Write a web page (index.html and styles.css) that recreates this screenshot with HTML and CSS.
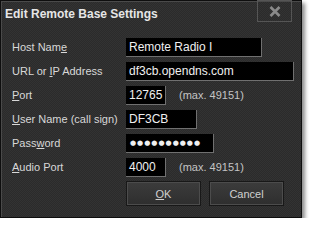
FILE: index.html
```html
<!DOCTYPE html>
<html lang="en">
<head>
    <meta charset="UTF-8">
    <title>Edit Remote Base Settings</title>
    <link rel="stylesheet" href="styles.css">
</head>
<body>
    <div class="dialog">
        <div class="titlebar">
            <span class="title">Edit Remote Base Settings</span>
            <button class="close-btn" aria-label="Close">
                <svg width="12" height="11" viewBox="0 0 12 11">
                    <path d="M1.5 1 L10.5 10 M10.5 1 L1.5 10" stroke="#8a8a8a" stroke-width="2.6" fill="none"/>
                </svg>
            </button>
        </div>
        <div class="form">
            <div class="row">
                <label>Host Nam<u>e</u></label>
                <div class="field w-host">Remote Radio I</div>
            </div>
            <div class="row">
                <label>URL or <u>I</u>P Address</label>
                <div class="field w-url">df3cb.opendns.com</div>
            </div>
            <div class="row">
                <label><u>P</u>ort</label>
                <div class="field w-port">12765</div>
                <span class="hint">(max. 49151)</span>
            </div>
            <div class="row">
                <label><u>U</u>ser Name (call sign)</label>
                <div class="field w-user">DF3CB</div>
            </div>
            <div class="row">
                <label>Pass<u>w</u>ord</label>
                <div class="field w-pass dots">&#9679;&#9679;&#9679;&#9679;&#9679;&#9679;&#9679;&#9679;&#9679;&#9679;</div>
            </div>
            <div class="row">
                <label><u>A</u>udio Port</label>
                <div class="field w-port">4000</div>
                <span class="hint">(max. 49151)</span>
            </div>
            <div class="buttons">
                <button class="btn"><u>O</u>K</button>
                <button class="btn">Cancel</button>
            </div>
        </div>
    </div>
</body>
</html>
```

FILE: styles.css
```css
body {
    margin: 0;
    background: #ffffff;
    font-family: 'Liberation Sans', Arial, sans-serif;
}
.dialog {
    width: 300px;
    height: 216px;
    border: 1px solid #0e0e0e;
    background-color: #2f2f2f;
    background-image: repeating-conic-gradient(#2b2b2b 0 25%, #333333 0 50%);
    background-size: 2px 2px;
    box-shadow: inset 1px 1px 0 #4a4a4a, 3px 3px 4px rgba(0, 0, 0, 0.45);
}
.titlebar {
    height: 26px;
    display: flex;
    align-items: flex-start;
    justify-content: space-between;
}
.title {
    color: #e6e6e6;
    font-weight: bold;
    font-size: 12px;
    margin: 6px 0 0 4px;
}
.close-btn {
    width: 35px;
    height: 22px;
    margin: -1px 9px 0 0;
    background: transparent;
    border: 1px solid #555;
    padding: 0;
    display: flex;
    align-items: center;
    justify-content: center;
}
.form {
    padding: 8px 0 0 11px;
}
.row {
    display: flex;
    align-items: center;
    height: 24px;
}
label {
    flex: 0 0 114px;
    white-space: nowrap;
    color: #d8d8d8;
    font-size: 11px;
}
.field {
    height: 18px;
    line-height: 18px;
    background: #000;
    color: #f0f0f0;
    font-size: 12px;
    padding-left: 3px;
    border-right: 1px solid #707070;
    border-bottom: 1px solid #707070;
    box-sizing: content-box;
    white-space: nowrap;
    overflow: hidden;
}
.w-host { width: 132px; }
.w-url { width: 164px; }
.w-port { width: 36px; }
.w-user { width: 67px; }
.w-pass { width: 83px; }
.dots {
    font-family: 'DejaVu Sans', sans-serif;
    font-size: 7px;
    letter-spacing: 1px;
    line-height: 19px;
    padding-left: 4px;
}
.hint {
    color: #c4c4c4;
    font-size: 11px;
    margin-left: 13px;
}
.buttons {
    display: flex;
    gap: 8px;
    margin: 2px 0 0 114px;
}
.btn {
    width: 75px;
    height: 25px;
    background: linear-gradient(#3c3c3c, #2e2e2e);
    border: 1px solid #181818;
    box-shadow: inset 0 0 0 1px #4c4c4c;
    color: #d0d0d0;
    font-family: 'Liberation Sans', Arial, sans-serif;
    font-size: 11px;
    padding: 0;
}
```
